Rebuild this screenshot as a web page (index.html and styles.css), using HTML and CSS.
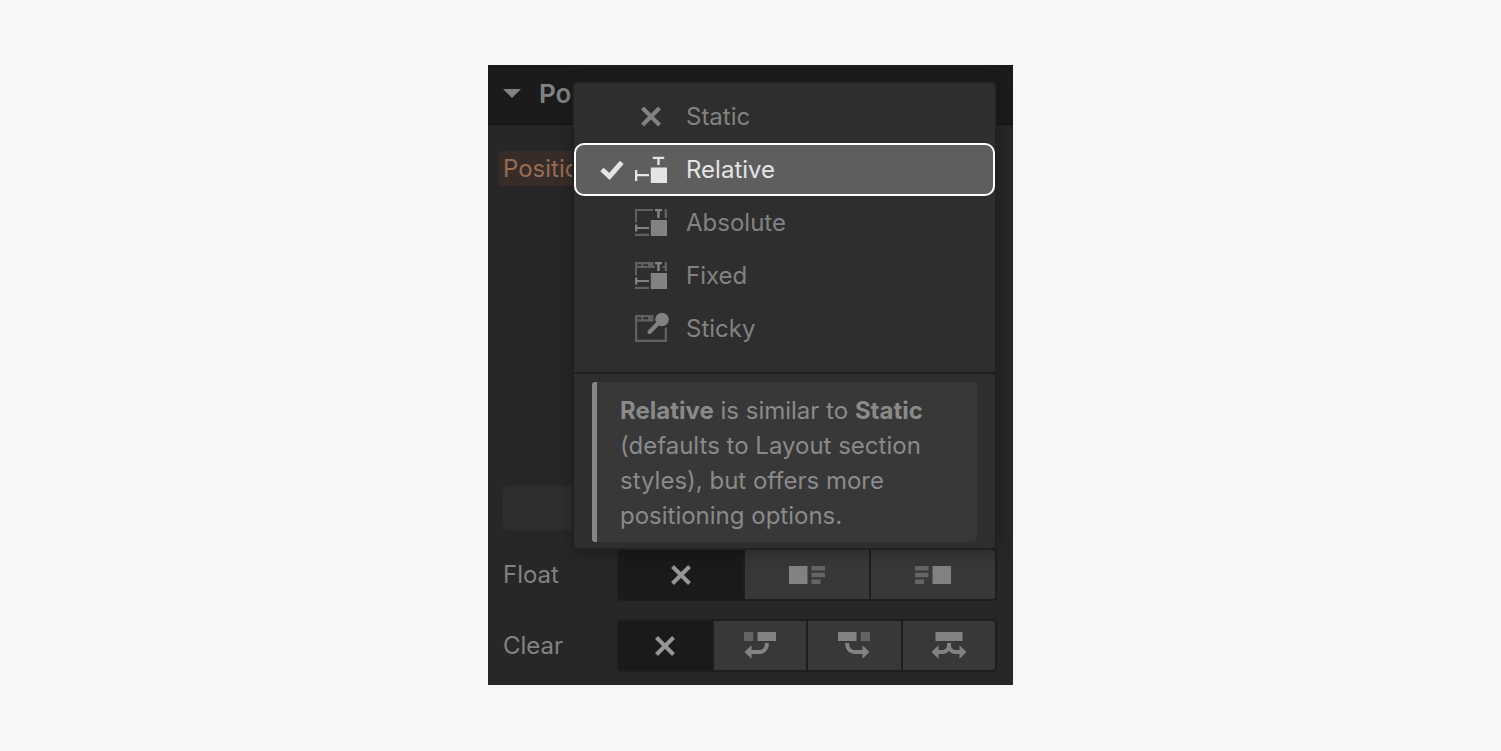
FILE: index.html
```
<!DOCTYPE html>
<html lang="en">
<head>
  <meta charset="UTF-8">
  <meta name="viewport" content="width=device-width, initial-scale=1">
  <title>Position</title>
  <link rel="stylesheet" href="styles.css">
</head>
<body>
<main class="panel">
  <h2 class="panel-header">
    <svg class="caret" viewBox="0 0 18 9" width="18" height="9"><path d="M0 0h18L9 9z"/></svg>
    Position
  </h2>

  <div class="panel-body">
    <span class="position-label" id="position-label">Position</span>
    <input class="empty-field" type="text" aria-label="Relative to">

    <div class="row">
      <span class="row-label" id="float-label">Float</span>
      <div class="segments" role="group" aria-labelledby="float-label">
        <button class="segment active" type="button" aria-label="None">
          <svg viewBox="0 0 22 22" width="22" height="22"><path class="cross" d="M2.5 2.5l17 17M19.5 2.5l-17 17"/></svg>
        </button>
        <button class="segment" type="button" aria-label="Left">
          <svg viewBox="0 0 36 18" width="36" height="18"><path d="M0 0h18.5v18H0z"/><path class="dim" d="M22.5 0H36v4.5H22.5zM22.5 6.7H36v4.6H22.5zM22.5 13.5h9V18h-9z"/></svg>
        </button>
        <button class="segment" type="button" aria-label="Right">
          <svg viewBox="0 0 36 18" width="36" height="18"><path d="M17.5 0H36v18H17.5z"/><path class="dim" d="M0 0h13.5v4.5H0zM0 6.7h13.5v4.6H0zM0 13.5h9V18H0z"/></svg>
        </button>
      </div>
    </div>

    <div class="row">
      <span class="row-label" id="clear-label">Clear</span>
      <div class="segments" role="group" aria-labelledby="clear-label">
        <button class="segment active" type="button" aria-label="None">
          <svg viewBox="0 0 22 22" width="22" height="22"><path class="cross" d="M2.5 2.5l17 17M19.5 2.5l-17 17"/></svg>
        </button>
        <button class="segment" type="button" aria-label="Left">
          <svg viewBox="0 0 32 27" width="32" height="27">
            <path class="dim" d="M0 0h9.3v9H0z"/>
            <path d="M13.5 0H32v9H13.5zM.5 20l7-6.7v13.4z"/>
            <path class="curve" d="M22.8 11v1.5a7.5 7.5 0 0 1-7.5 7.6H7"/>
          </svg>
        </button>
        <button class="segment" type="button" aria-label="Right">
          <svg viewBox="0 0 32 27" width="32" height="27">
            <path class="dim" d="M22.7 0H32v9h-9.3z"/>
            <path d="M0 0h18.5v9H0zM31.5 20l-7-6.7v13.4z"/>
            <path class="curve" d="M9.2 11v1.5a7.5 7.5 0 0 0 7.5 7.6H25"/>
          </svg>
        </button>
        <button class="segment" type="button" aria-label="Both">
          <svg viewBox="0 0 36 27" width="36" height="27">
            <path d="M4.5 0h27v9h-27zM.5 20l7-6.7v13.4zM35.5 20l-7-6.7v13.4z"/>
            <path class="curve" d="M18 11v2.5a6.6 6.6 0 0 1-6.6 6.6H7M18 11v2.5a6.6 6.6 0 0 0 6.6 6.6H29"/>
          </svg>
        </button>
      </div>
    </div>
  </div>

  <div class="menu">
    <div class="options" role="listbox" aria-labelledby="position-label">
      <button class="option" type="button" role="option" aria-selected="false">
        <svg class="icon" viewBox="0 0 32 27" width="32" height="27"><path class="cross" d="M7.5 5l17 17M24.5 5l-17 17"/></svg>
        Static
      </button>
      <button class="option selected" type="button" role="option" aria-selected="true">
        <svg class="check" viewBox="0 0 24 20" width="24" height="20"><path d="M2 9.5l7.5 7L21.8 2.4"/></svg>
        <svg class="icon" viewBox="0 0 32 27" width="32" height="27">
          <path d="M15.8 11.6H32V27H15.8zM17.8.8h11.4V3h-4.5v6h-2.4V3h-4.5zM0 14h2.3v4H14v2.2H2.3V25H0z"/>
        </svg>
        Relative
      </button>
      <button class="option" type="button" role="option" aria-selected="false">
        <svg class="icon" viewBox="0 0 32 27" width="32" height="27">
          <path class="dim" d="M0 0h18v2H2v11.5H0zM29.6 0H32v9h-2.4zM0 24.8h14V27H0z"/>
          <path d="M15.8 11H32v16H15.8zM20 0h7v2.3h-2.3V9h-2.5V2.3H20zM0 15.5h2.3v2.4H14v2.2H2.3v2.4H0z"/>
        </svg>
        Absolute
      </button>
      <button class="option" type="button" role="option" aria-selected="false">
        <svg class="icon" viewBox="0 0 32 27" width="32" height="27">
          <path class="dim" fill-rule="evenodd" d="M0 0h18.5v4H20v2H2v7.5H0zM2.3 2.2V4h4V2.2zM8.5 2.2V4H13V2.2zM29.6 0H32v9h-2.4V6h-2V4h2zM0 24.8h14V27H0z"/>
          <path d="M15.8 11H32v16H15.8zM20 0h7v2.3h-2.3V9h-2.5V2.3H20zM0 15.5h2.3v2.4H14v2.2H2.3v2.4H0z"/>
        </svg>
        Fixed
      </button>
      <button class="option" type="button" role="option" aria-selected="false">
        <svg class="icon" viewBox="0 0 32 27" width="32" height="27">
          <path class="dim" fill-rule="evenodd" d="M0 0h18.5v6.5H2.2v18.3h27.5V13.5L32 12v15H0zM2.3 2.2v2.1h4V2.2zM8.5 2.2v2.1H13V2.2z"/>
          <circle cx="27" cy="4.5" r="6.8"/>
          <path class="pin" d="M24 7.5L14.5 17"/>
        </svg>
        Sticky
      </button>
    </div>
    <div class="help">
      <p class="note"><strong>Relative</strong> is similar to <strong>Static</strong> (defaults to Layout section styles), but offers more positioning options.</p>
    </div>
  </div>
</main>
</body>
</html>
```
FILE: styles.css
```
* {
  box-sizing: border-box;
}
body {
  display: flex;
  align-items: center;
  justify-content: center;
  min-height: 100vh;
  margin: 0;
  padding-bottom: 1px;
  background-color: #f6f7f9;
  color: #828282;
  font-family: Inter, "Liberation Sans", sans-serif;
  font-size: 24px;
}
button,
input {
  margin: 0;
  padding: 0;
  border: 0;
  color: inherit;
  font: inherit;
}
svg {
  overflow: visible;
  fill: currentColor;
}
.panel {
  position: relative;
  width: 100%;
  max-width: 525px;
  background-color: #272727;
}
.panel-header {
  display: flex;
  align-items: center;
  gap: 18px;
  height: 60px;
  margin: 0;
  padding: 0 15px 2px;
  border-bottom: 2px solid #161616;
  background-color: #1b1b1b;
  font-size: 26px;
  font-weight: 600;
}
.panel-body {
  display: flex;
  flex-direction: column;
  gap: 18px;
  padding: 26px 16px 13px 15px;
}
.position-label {
  align-self: flex-start;
  margin-left: -4px;
  padding: 0 4px;
  border-radius: 4px;
  background-color: #382c28;
  color: #966d53;
  line-height: 35px;
}
.empty-field {
  height: 44px;
  margin-top: 282px;
  border-radius: 4px;
  background-color: #2e2e2e;
}
.row {
  display: grid;
  grid-template-columns: 114px 1fr;
  align-items: center;
}
.segments {
  display: grid;
  grid-auto-flow: column;
  grid-auto-columns: 1fr;
  gap: 2px;
  height: 53px;
  padding: 2px;
  border-radius: 4px;
  background-color: #1e1e1e;
}
.segment {
  display: flex;
  align-items: center;
  justify-content: center;
  background-color: #383838;
}
.segment.active {
  background-color: #1a1a1a;
  color: #969696;
}
.segment:last-child {
  border-radius: 0 3px 3px 0;
}
.dim {
  opacity: 0.6;
}
.cross,
.curve,
.pin,
.check path {
  fill: none;
  stroke: currentColor;
  stroke-width: 4;
}
.check path {
  stroke-width: 5;
}
.pin {
  stroke-linecap: round;
}

/* dropdown */
.menu {
  position: absolute;
  top: 16px;
  right: 16px;
  left: 84px;
  border: 2px solid #212121;
  border-radius: 6px;
  background-color: #2e2e2e;
  box-shadow: 0 4px 16px rgba(0, 0, 0, 0.25);
}
.options {
  padding: 7px 0 17px;
  border-bottom: 2px solid #1f1f1f;
}
.option {
  display: grid;
  grid-template-columns: 35px 51px 1fr;
  align-items: center;
  width: 100%;
  height: 53px;
  padding-left: 24px;
  border: 2px solid transparent;
  border-radius: 10px;
  background: none;
  text-align: left;
}
.option .check {
  grid-column: 1;
}
.option .icon {
  grid-column: 2;
}
.option.selected {
  border-color: #fff;
  background-color: #5e5e5e;
  color: #e4e4e4;
}
.help {
  padding: 8px 18px 6px;
}
.note {
  margin: 0;
  padding: 11px 23px 9px;
  border-left: 5px solid #868686;
  border-radius: 3px 5px 5px 3px;
  background-color: #383838;
  color: #8a8a8a;
  line-height: 35px;
}
```
